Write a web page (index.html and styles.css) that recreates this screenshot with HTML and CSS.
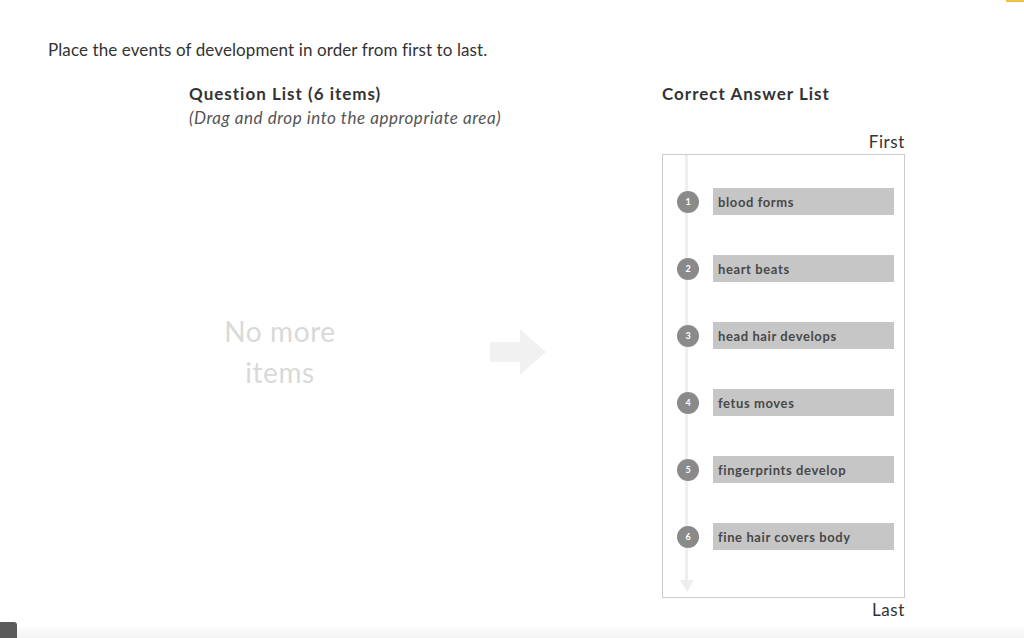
FILE: index.html
```html
<!DOCTYPE html>
<html lang="en">
<head>
<meta charset="utf-8">
<title>Ordering question</title>
<link rel="stylesheet" href="styles.css">
</head>
<body>
<div class="topmark"></div>
<main class="page">
  <p class="prompt">Place the events of development in order from first to last.</p>
  <div class="lists">
    <section class="qcol">
      <h2 class="title">Question List (6 items)</h2>
      <p class="hint">(Drag and drop into the appropriate area)</p>
      <div class="qbody">
        <div class="empty">No more<br>items</div>
        <svg class="bigarrow" width="56" height="46" viewBox="0 0 56 46" aria-hidden="true">
          <path d="M0 13 H30 V0 L56 23 L30 46 V33 H0 Z" fill="#f1f1f1"/>
        </svg>
      </div>
    </section>
    <section class="acol">
      <h2 class="title">Correct Answer List</h2>
      <div class="endlabel first">First</div>
      <div class="box">
        <div class="track"></div>
        <svg class="trackhead" width="14" height="12" viewBox="0 0 14 12" aria-hidden="true">
          <path d="M0 0 H14 L7 12 Z" fill="#eeeeee"/>
        </svg>
        <ol class="items">
          <li class="item"><span class="num">1</span><span class="bar">blood forms</span></li>
          <li class="item"><span class="num">2</span><span class="bar">heart beats</span></li>
          <li class="item"><span class="num">3</span><span class="bar">head hair develops</span></li>
          <li class="item"><span class="num">4</span><span class="bar">fetus moves</span></li>
          <li class="item"><span class="num">5</span><span class="bar">fingerprints develop</span></li>
          <li class="item"><span class="num">6</span><span class="bar">fine hair covers body</span></li>
        </ol>
      </div>
      <div class="endlabel last">Last</div>
    </section>
  </div>
</main>
<footer class="footer"><span class="tab"></span></footer>
</body>
</html>
```

FILE: styles.css
```css
* { box-sizing: border-box; }
html, body {
  margin: 0;
  padding: 0;
  background: #ffffff;
}
body {
  font-family: Lato, "Open Sans", "Liberation Sans", sans-serif;
  color: #333333;
  width: 1024px;
  height: 638px;
  overflow: hidden;
  position: relative;
}
.topmark {
  position: absolute;
  top: 0;
  right: 0;
  width: 18px;
  height: 2px;
  background: #f0c24a;
}
.page {
  padding: 38px 0 0 48px;
  height: 628px;
}
.prompt {
  margin: 0;
  font-size: 17px;
  line-height: 24px;
  letter-spacing: 0.1px;
  color: #333;
}
.lists {
  display: flex;
  margin-top: 20px;
}
.qcol {
  margin-left: 141px;
  width: 473px;
}
.title {
  margin: 0;
  font-size: 17px;
  line-height: 24px;
  font-weight: 700;
  letter-spacing: 1px;
  color: #333;
}
.hint {
  margin: 0;
  font-size: 17px;
  line-height: 24px;
  font-style: italic;
  letter-spacing: 0.55px;
  color: #555;
}
.qbody {
  display: flex;
  align-items: center;
  padding-top: 181px;
}
.empty {
  width: 182px;
  text-align: center;
  font-size: 28px;
  line-height: 41px;
  letter-spacing: 0.6px;
  color: #d9d9d9;
}
.bigarrow {
  margin-left: 119px;
  display: block;
}
.acol {
  width: 243px;
}
.endlabel {
  font-size: 17px;
  line-height: 24px;
  letter-spacing: 0.6px;
  text-align: right;
  color: #333;
}
.first { margin-top: 24px; }
.box {
  position: relative;
  height: 444px;
  border: 1px solid #cccccc;
  padding: 33px 10px 0 14px;
}
.track {
  position: absolute;
  left: 22px;
  top: 0;
  width: 3px;
  height: 426px;
  background: #eeeeee;
}
.trackhead {
  position: absolute;
  left: 16.5px;
  top: 425px;
}
.items {
  position: relative;
  list-style: none;
  margin: 0;
  padding: 0;
  display: flex;
  flex-direction: column;
  gap: 40px;
}
.item {
  display: flex;
  align-items: center;
  height: 27px;
}
.num {
  width: 22px;
  height: 22px;
  border-radius: 50%;
  background: #8a8a8a;
  color: #fff;
  font-size: 9px;
  font-weight: 700;
  display: flex;
  align-items: center;
  justify-content: center;
  flex: none;
}
.bar {
  margin-left: 14px;
  flex: 1;
  height: 27px;
  background: #c6c6c6;
  color: #484848;
  font-size: 13px;
  font-weight: 700;
  letter-spacing: 0.6px;
  line-height: 28px;
  padding-left: 5px;
  white-space: nowrap;
}
.footer {
  position: relative;
  height: 10px;
  background: linear-gradient(#fbfbfb, #f3f3f3);
}
.tab {
  position: absolute;
  left: 0;
  bottom: 0;
  width: 17px;
  height: 16px;
  background: #5a5a5a;
  border-top-right-radius: 3px;
}
```
